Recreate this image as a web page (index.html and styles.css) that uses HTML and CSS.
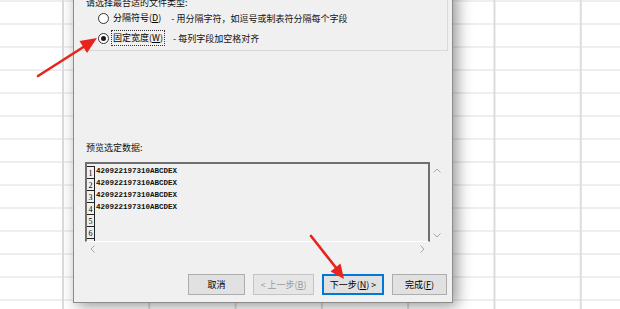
FILE: index.html
```html
<!DOCTYPE html>
<html lang="zh-CN">
<head>
<meta charset="utf-8">
<title>文本导入向导</title>
<link rel="stylesheet" href="styles.css">
</head>
<body>
<div class="dialog">
  <div class="group">
    <div class="group-title">请选择最合适的文件类型:</div>
    <div class="opt">
      <span class="radio"></span>
      <span class="opt-label">分隔符号(<u>D</u>)</span>
      <span class="opt-desc">- 用分隔字符，如逗号或制表符分隔每个字段</span>
    </div>
    <div class="opt">
      <span class="radio checked"></span>
      <span class="opt-label focus">固定宽度(<u>W</u>)</span>
      <span class="opt-desc">- 每列字段加空格对齐</span>
    </div>
  </div>

  <div class="preview-title">预览选定数据:</div>

  <div class="preview">
    <div class="preview-main">
      <div class="preview-box">
        <div class="row"><span class="num">1</span><span class="data">420922197310ABCDEX</span></div>
        <div class="row"><span class="num">2</span><span class="data">420922197310ABCDEX</span></div>
        <div class="row"><span class="num">3</span><span class="data">420922197310ABCDEX</span></div>
        <div class="row"><span class="num">4</span><span class="data">420922197310ABCDEX</span></div>
        <div class="row"><span class="num">5</span><span class="data"></span></div>
        <div class="row"><span class="num">6</span><span class="data"></span></div>
        <div class="row"><span class="num"></span><span class="data"></span></div>
      </div>
      <div class="vscroll">
        <svg width="8" height="5" viewBox="0 0 8 5"><polyline points="0.5,4.5 4,1 7.5,4.5" /></svg>
        <svg width="8" height="5" viewBox="0 0 8 5"><polyline points="0.5,0.5 4,4 7.5,0.5" /></svg>
      </div>
    </div>
    <div class="hscroll">
      <svg width="5" height="8" viewBox="0 0 5 8"><polyline points="4.5,0.5 1,4 4.5,7.5" /></svg>
      <svg width="5" height="8" viewBox="0 0 5 8"><polyline points="0.5,0.5 4,4 0.5,7.5" /></svg>
    </div>
  </div>

  <div class="buttons">
    <button class="btn w-cancel">取消</button>
    <button class="btn w-prev disabled">&lt; 上一步(<u>B</u>)</button>
    <button class="btn w-next default">下一步(<u>N</u>) &gt;</button>
    <button class="btn w-finish">完成(<u>F</u>)</button>
  </div>
</div>

<svg class="arrows" width="620" height="309" viewBox="0 0 620 309">
  <line x1="38" y1="76" x2="85" y2="46" />
  <polygon points="97,38 87,53 79.5,41" />
  <line x1="311" y1="236" x2="337" y2="269" />
  <polygon points="344,279 340.5,263.5 330.5,271.5" />
</svg>
</body>
</html>
```

FILE: styles.css
```css
html, body {
  margin: 0;
  padding: 0;
}

body {
  width: 620px;
  height: 309px;
  overflow: hidden;
  position: relative;
  background-color: #ffffff;
  background-image:
    linear-gradient(to bottom, #dcdcdc 0, #dcdcdc 1.5px, transparent 1.5px),
    linear-gradient(to right, #dcdcdc 0, #dcdcdc 1.5px, transparent 1.5px);
  background-size: 100% 23px, 86.3px 100%;
  background-position: 0 0.5px, 62px 0;
  font-family: "Noto Sans CJK SC", "Noto Sans", sans-serif;
  font-size: 9px;
  color: #000;
}

.dialog {
  position: absolute;
  left: 73px;
  top: -11px;
  width: 380px;
  height: 314px;
  box-sizing: border-box;
  background: #f0f0f0;
  border: 1px solid #8c8c8c;
  box-shadow: 4px 3px 14px rgba(0, 0, 0, 0.42);
  display: flex;
  flex-direction: column;
}

/* group box */
.group {
  margin-left: 6px;
  width: 368px;
  box-sizing: border-box;
  border-right: 1px solid #d9d9d9;
  border-bottom: 1px solid #d9d9d9;
  padding: 7px 0 2px 6px;
}

.group-title {
  height: 11px;
  line-height: 11px;
  color: #111;
}

.opt {
  height: 20px;
  display: flex;
  align-items: center;
  padding-left: 12px;
}

.radio {
  width: 11px;
  height: 11px;
  box-sizing: border-box;
  border: 1px solid #333;
  border-radius: 50%;
  background: #fff;
  display: flex;
  align-items: center;
  justify-content: center;
  flex: none;
}

.radio.checked::after {
  content: "";
  width: 5px;
  height: 5px;
  border-radius: 50%;
  background: #1a1a1a;
}

.opt-label {
  margin-left: 2px;
  height: 16px;
  line-height: 14px;
  box-sizing: border-box;
  padding: 0 1px;
  border: 1px dotted transparent;
  white-space: nowrap;
}

.opt-label.focus {
  border-color: #333;
}

.opt-desc {
  margin-left: 8px;
  white-space: nowrap;
  color: #111;
}

/* preview */
.preview-title {
  margin: 91px 0 0 12px;
  height: 12px;
  line-height: 12px;
  color: #111;
}

.preview {
  margin: 8px 0 0 11px;
  width: 359px;
}

.preview-main {
  display: flex;
}

.preview-box {
  width: 345px;
  height: 80px;
  box-sizing: border-box;
  border-top: 2px solid #6f6f6f;
  border-left: 2px solid #6f6f6f;
  border-right: 2px solid #6f6f6f;
  border-bottom: 1px solid #ffffff;
  overflow: hidden;
  padding-top: 2px;
}

.row {
  display: flex;
  height: 12px;
}

.num {
  width: 8px;
  flex: none;
  box-sizing: border-box;
  border-top: 1px solid #222;
  border-right: 1px solid #222;
  font-family: "Liberation Serif", serif;
  font-size: 8px;
  line-height: 8px;
  padding-top: 3px;
  text-align: center;
  overflow: hidden;
}

.data {
  padding-left: 1px;
  font-family: "Liberation Mono", monospace;
  font-size: 7.5px;
  font-weight: bold;
  line-height: 10px;
  white-space: nowrap;
  color: #111;
}

.vscroll {
  width: 14px;
  height: 80px;
  display: flex;
  flex-direction: column;
  justify-content: space-between;
  align-items: center;
  padding: 6px 0 4px;
  box-sizing: border-box;
}

.hscroll {
  height: 14px;
  width: 345px;
  display: flex;
  justify-content: space-between;
  align-items: center;
  padding: 0 5px 0 5px;
  box-sizing: border-box;
}

.vscroll svg, .hscroll svg {
  display: block;
}

.vscroll polyline, .hscroll polyline {
  fill: none;
  stroke: #a8a8a8;
  stroke-width: 1;
}

/* buttons */
.buttons {
  margin-top: 18px;
  display: flex;
  justify-content: flex-end;
  gap: 8px;
  padding-right: 5px;
}

.btn {
  height: 21px;
  box-sizing: border-box;
  margin: 0;
  padding: 0;
  background: #e1e1e1;
  border: 1px solid #adadad;
  border-radius: 0;
  font-family: "Noto Sans CJK SC", "Noto Sans", sans-serif;
  font-size: 9px;
  color: #000;
  white-space: nowrap;
}

.btn.disabled {
  color: #9c9c9c;
  background: #e6e6e6;
  border-color: #c4c4c4;
}

.btn.default {
  border: 1px solid #0078d7;
  box-shadow: inset 0 0 0 1px #0078d7;
}

.w-cancel { width: 57px; }
.w-prev { width: 61px; }
.w-next { width: 62px; }
.w-finish { width: 55px; }

/* annotation arrows */
.arrows {
  position: absolute;
  left: 0;
  top: 0;
  pointer-events: none;
}

.arrows line {
  stroke: #e8231c;
  stroke-width: 2.6;
  stroke-linecap: round;
}

.arrows polygon {
  fill: #e8231c;
}
```
